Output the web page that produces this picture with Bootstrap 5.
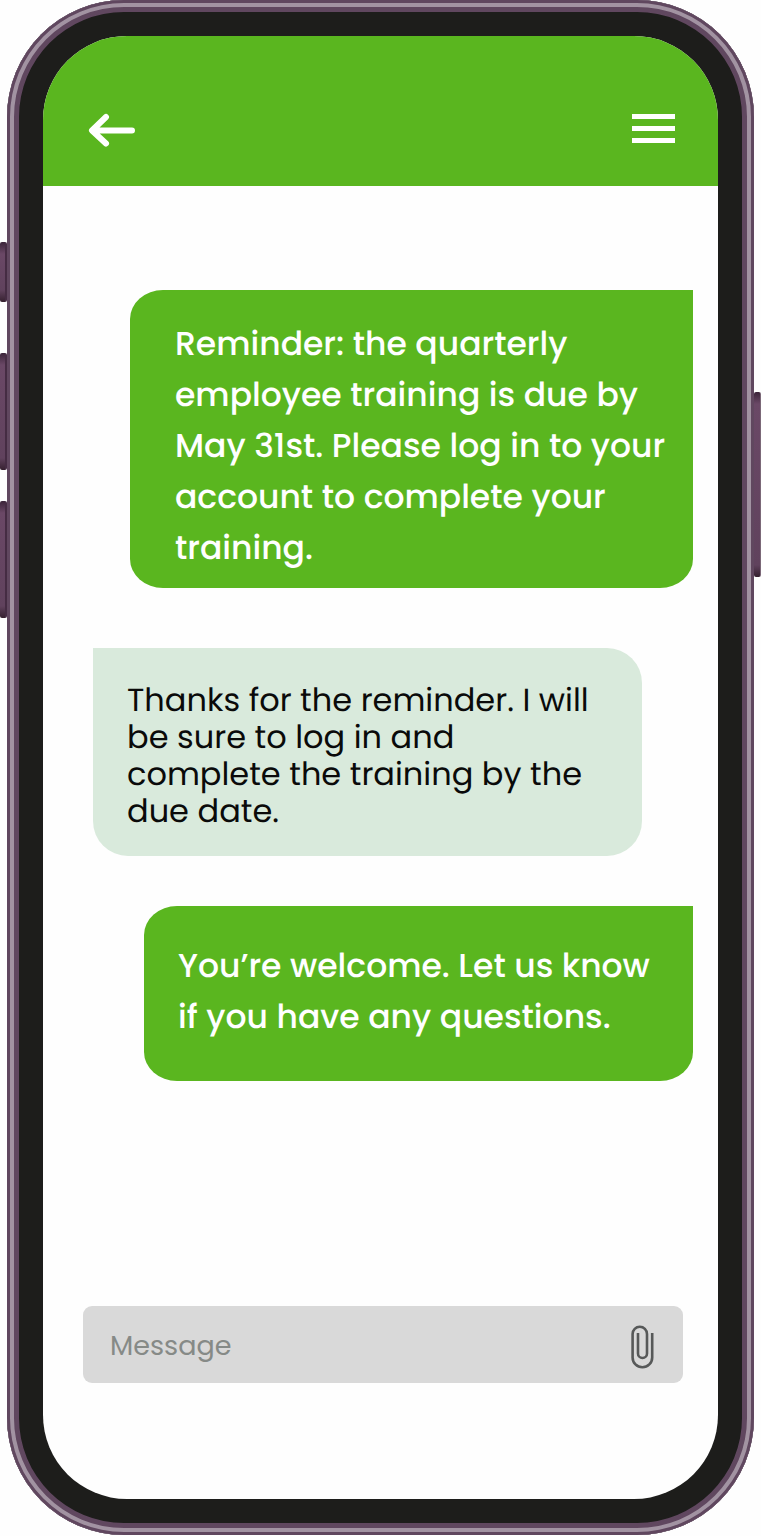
<!DOCTYPE html>
<html lang="en">
<head>
<meta charset="utf-8">
<meta name="viewport" content="width=device-width, initial-scale=1">
<title>Messages</title>
<link href="https://cdn.jsdelivr.net/npm/bootstrap@5.3.0/dist/css/bootstrap.min.css" rel="stylesheet">
<style>
  body { background: #fefefe; font-family: Poppins, Inter, "Open Sans", sans-serif; text-rendering: geometricPrecision; }
  .phone-wrap { padding: 0 7px 1px 7px; }
  .phone {
    padding: 36px;
    border-radius: 117px;
    background: #1d1d1b;
    box-shadow: inset 0 0 0 3px #60475f, inset 0 0 0 7px #a293a2, inset 0 0 0 12px #60475f;
  }
  .screen { background: #fefefe; border-radius: 84px; }
  .topbar { background: #5ab61f; height: 150px; padding: 38px 42px 0 45px; }
  .icon-btn { border: 0; padding: 0; background: none; line-height: 0; }
  .chat { padding: 104px 25px 0 50px; }
  .sent {
    background: #5ab61f; color: #fff; font-size: 33px; font-weight: 500; line-height: 51px;
    border-radius: 33px 0 33px 33px / 29px 0 29px 29px;
  }
  .received {
    background: #d9eadc; color: #0a0a0a; font-size: 32px; line-height: 37px;
    border-radius: 0 35px 35px 35px;
    margin: 60px 51px 50px 0; padding: 34px 20px 26px 34px;
  }
  .sent-long { margin-left: 37px; padding: 28px 0 15px 45px; }
  .sent-short { margin-left: 51px; padding: 34px 0 39px 34px; }
  .composer {
    margin: auto 35px 116px 40px; height: 77px; padding: 0 28px 0 27px;
    background: #d9d9d9; border-radius: 9px;
  }
  .composer input { font-size: 27px; color: #333; min-width: 0; }
  .composer .form-control { padding: 4px 0 0; }
  .composer input::placeholder { color: #868a87; opacity: 1; }
  .composer .icon-btn { padding-top: 4px; }
  .side-key {
    position: absolute; width: 7px; border-radius: 2px;
    background: linear-gradient(#3b2439, #6a4866 12px, #60425d calc(100% - 12px), #35202f);
  }
  .key-left { left: 0; border-right: 2px solid #452c43; }
  .key-right { right: 0; border-right: 1px solid #7b6878; }
  .key-a { top: 242px; height: 60px; }
  .key-b { top: 353px; height: 117px; }
  .key-c { top: 501px; height: 117px; }
  .key-d { top: 392px; height: 185px; }
</style>
</head>
<body>
<div class="phone-wrap position-relative min-vh-100 d-flex">
  <span class="side-key key-left key-a"></span>
  <span class="side-key key-left key-b"></span>
  <span class="side-key key-left key-c"></span>
  <span class="side-key key-right key-d"></span>
  <div class="phone flex-grow-1 d-flex">
    <div class="screen flex-grow-1 d-flex flex-column overflow-hidden">
      <header class="topbar d-flex justify-content-between align-items-center">
        <button class="icon-btn" type="button" aria-label="Back">
          <svg width="48" height="34" viewBox="0 0 48 34" fill="none" stroke="#fff" stroke-width="6" stroke-linecap="round" stroke-linejoin="round"><path d="M18 4 4 17.500l14 13M6 17.500h38"/></svg>
        </button>
        <button class="icon-btn" type="button" aria-label="Menu">
          <svg width="44" height="34" viewBox="0 0 44 34" fill="#fff"><path d="M0 1h43v5H0zM0 13h43v5H0zM0 25h43v5H0z"/></svg>
        </button>
      </header>
      <main class="chat">
        <div class="sent sent-long">Reminder: the quarterly<br>employee training is due by<br>May 31st. Please log in to your<br>account to complete your<br>training.</div>
        <div class="received">Thanks for the reminder. I will<br>be sure to log in and<br>complete the training by the<br>due date.</div>
        <div class="sent sent-short">You’re welcome. Let us know<br>if you have any questions.</div>
      </main>
      <form class="composer d-flex align-items-center">
        <input class="form-control border-0 bg-transparent shadow-none" type="text" placeholder="Message" aria-label="Message">
        <button class="icon-btn" type="button" aria-label="Attach file">
          <svg width="24" height="44" viewBox="0 0 24 44" fill="none" stroke="#575959" stroke-width="2.6"><path d="M7 8v20.500a4.500 4.500 0 0 0 9 0V9A7.200 7.200 0 0 0 1.600 9v23.500a9.800 9.800 0 0 0 19.600 0V8"/></svg>
        </button>
      </form>
    </div>
  </div>
</div>
<script src="https://cdn.jsdelivr.net/npm/bootstrap@5.3.0/dist/js/bootstrap.bundle.min.js"></script>
</body>
</html>
